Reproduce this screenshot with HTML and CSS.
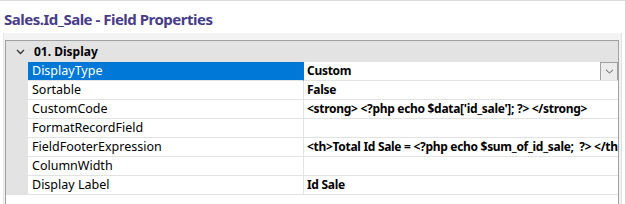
FILE: index.html
```html
<!DOCTYPE html>
<html lang="en">
<head>
  <meta charset="UTF-8" />
  <title>Sales.Id_Sale - Field Properties</title>
  <link rel="stylesheet" href="styles.css">
</head>
<body>
  <div class="title">Sales.Id_Sale - Field Properties</div>

  <div class="panel">
    <div class="grid">
      <div class="category">
        <span class="chev">
          <svg width="9" height="6" viewBox="0 0 9 6"><path d="M1 1 L4.5 4.5 L8 1" fill="none" stroke="#333" stroke-width="1.3"/></svg>
        </span>
        <span class="cat-name">01. Display</span>
      </div>

      <div class="row selected">
        <div class="gutter"></div>
        <div class="name">DisplayType</div>
        <div class="value">Custom
          <span class="drop">
            <svg width="9" height="5" viewBox="0 0 9 5"><path d="M1 0.8 L4.5 4 L8 0.8" fill="none" stroke="#555" stroke-width="1"/></svg>
          </span>
        </div>
      </div>
      <div class="row">
        <div class="gutter"></div>
        <div class="name">Sortable</div>
        <div class="value">False</div>
      </div>
      <div class="row">
        <div class="gutter"></div>
        <div class="name">CustomCode</div>
        <div class="value">&lt;strong&gt; &lt;?php echo $data['id_sale']; ?&gt; &lt;/strong&gt;</div>
      </div>
      <div class="row">
        <div class="gutter"></div>
        <div class="name">FormatRecordField</div>
        <div class="value"></div>
      </div>
      <div class="row">
        <div class="gutter"></div>
        <div class="name">FieldFooterExpression</div>
        <div class="value">&lt;th&gt;Total Id Sale = &lt;?php echo $sum_of_id_sale;&nbsp; ?&gt; &lt;/th&gt;</div>
      </div>
      <div class="row">
        <div class="gutter"></div>
        <div class="name">ColumnWidth</div>
        <div class="value"></div>
      </div>
      <div class="row">
        <div class="gutter"></div>
        <div class="name">Display Label</div>
        <div class="value">Id Sale</div>
      </div>
    </div>
  </div>
</body>
</html>
```

FILE: styles.css
```css
:root {
  --title: #483d8b;
  --border: #a0a0a0;
  --line: #e3e3e3;
  --gutter: #e3e3e3;
  --select: #0078d7;
  --panel: #f3f3f3;
}

body {
  margin: 0;
  height: 204px;
  box-sizing: border-box;
  overflow: hidden;
  font-family: "Noto Sans", "Open Sans", sans-serif;
  font-size: 12px;
  color: #000;
  background: #fff;
  border-top: 1px solid #dadada;
}

.title {
  height: 32px;
  padding-left: 4px;
  line-height: 36px;
  font-size: 15px;
  font-weight: 700;
  letter-spacing: -0.5px;
  color: var(--title);
}

.panel {
  margin-left: 3px;
  width: 619px;
  height: 171px;
  background: var(--panel);
  border-left: 1px solid #e6e6e6;
  border-right: 1px solid #e0e0e0;
  padding: 7px 0 0 1px;
  box-sizing: border-box;
}

.grid {
  width: 614px;
  height: 164px;
  background: #fff;
  border: 1px solid var(--border);
  border-bottom: none;
  box-sizing: border-box;
}

.category {
  height: 21px;
  display: flex;
  align-items: center;
  background: var(--gutter);
}

.chev {
  width: 27px;
  display: flex;
  justify-content: center;
  padding-left: 1px;
}

.cat-name {
  font-weight: 700;
}

.row {
  display: flex;
  height: 19px;
  line-height: 18px;
}

.gutter {
  width: 22px;
  flex: none;
  background: var(--gutter);
}

.name {
  width: 276px;
  flex: none;
  padding-left: 4px;
  box-sizing: border-box;
  font-size: 12.5px;
  border-right: 1px solid var(--line);
  border-bottom: 1px solid var(--line);
  white-space: nowrap;
}

.value {
  flex: 1;
  min-width: 0;
  padding-left: 3px;
  position: relative;
  font-weight: 700;
  letter-spacing: -0.3px;
  white-space: nowrap;
  overflow: hidden;
  border-bottom: 1px solid var(--line);
}

.selected .name {
  background: var(--select);
  color: #fff;
  border-right-color: var(--select);
}

.drop {
  position: absolute;
  right: 0;
  top: 0;
  width: 16px;
  height: 17px;
  background: #ececec;
  border: 1px solid var(--border);
  display: flex;
  align-items: center;
  justify-content: center;
}
```
